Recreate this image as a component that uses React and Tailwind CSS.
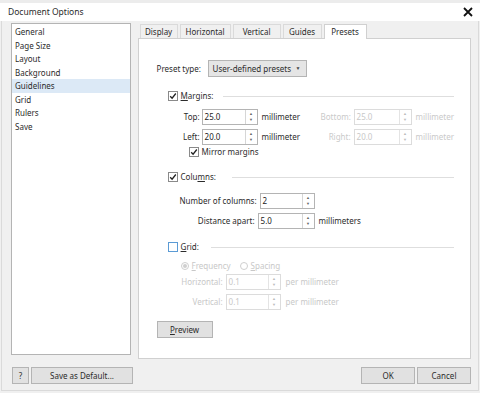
import React from "react";

const font = { fontFamily: '"Noto Sans", "Open Sans", sans-serif' };

const Spin = ({ value, width = "w-[42px]", disabled = false }) => (
    <div className={`flex h-[16px] ${disabled ? "border-[#dcdcdc]" : "border-[#b4b4b4]"} border bg-white`}>
        <div className={`${width} pl-[2px] leading-[14px] ${disabled ? "text-[#c8c8c8]" : "text-[#222]"}`}>
            {value}
        </div>
        <div className={`w-[12px] flex flex-col items-center justify-center border-l ${disabled ? "border-[#e4e4e4] text-[#bbb]" : "border-[#d6d6d6] text-[#666]"} text-[4px] leading-[6px]`}>
            <span>▲</span>
            <span>▼</span>
        </div>
    </div>
);

const Check = ({ checked = true, blue = false }) => (
    <div
        className={`w-[10px] h-[10px] border bg-white flex items-center justify-center ${
            blue ? "border-[#5b9bd5]" : "border-[#8a8a8a]"
        }`}
    >
        {checked && (
            <svg width="8" height="8" viewBox="0 0 8 8">
                <path d="M1.2 4.2 L3.1 6.2 L6.8 1.5" stroke="#222" strokeWidth="1.3" fill="none" />
            </svg>
        )}
    </div>
);

const Section = ({ label, under, checked, blue, lineFrom }) => (
    <div className="flex items-center">
        <Check checked={checked} blue={blue} />
        <span className="ml-[3px]">
            {label.slice(0, under)}
            <u>{label[under]}</u>
            {label.slice(under + 1)}
        </span>
        <div className={`flex-1 h-px bg-[#dedede] ${lineFrom}`} />
    </div>
);

const menu = ["General", "Page Size", "Layout", "Background", "Guidelines", "Grid", "Rulers", "Save"];
const tabs = [
    { name: "Display", w: "w-[38px]" },
    { name: "Horizontal", w: "w-[51px]" },
    { name: "Vertical", w: "w-[48px]" },
    { name: "Guides", w: "w-[39px]" },
    { name: "Presets", w: "w-[43px]" },
];

export default function App() {
    return (
        <div style={font} className="w-[480px] h-[393px] bg-[#f0f0f0] text-[8px] text-[#2b2b2b] flex flex-col overflow-hidden whitespace-nowrap">
            {/* title bar */}
            <div className="h-[21px] bg-white flex items-center justify-between pl-[8px] pr-[7px] border-t-[3px] border-[#ececec]">
                <span className="text-[8.5px]">Document Options</span>
                <svg width="10" height="10" viewBox="0 0 10 10">
                    <path d="M1 1 L9 9 M9 1 L1 9" stroke="#111" strokeWidth="1.8" />
                </svg>
            </div>

            <div className="flex-1 flex flex-col border-l border-r border-b border-[#dadada] mx-[1px] mb-[2px] bg-[#f0f0f0]">
                <div className="flex pt-[2px] pl-[9px] pr-[7px] gap-[7px]">
                    {/* left list */}
                    <div className="w-[121px] h-[332px] bg-white border border-[#b4b4b4] pt-[1px]">
                        {menu.map((m) => (
                            <div
                                key={m}
                                className={`h-[13.5px] leading-[13.5px] pl-[3px] ${
                                    m === "Guidelines" ? "bg-[#dce9f6]" : ""
                                }`}
                            >
                                {m}
                            </div>
                        ))}
                    </div>

                    {/* tab area */}
                    <div className="flex-1 flex flex-col">
                        <div className="flex h-[15px] items-end pl-[2px] gap-[2px]">
                            {tabs.map((t) => (
                                <div
                                    key={t.name}
                                    className={`${t.w} text-center border border-b-0 ${
                                        t.name === "Presets"
                                            ? "h-[15px] bg-white border-[#d0d0d0] relative top-px"
                                            : "h-[14px] bg-[#f0f0f0] border-[#dadada]"
                                    } leading-[13px]`}
                                >
                                    {t.name}
                                </div>
                            ))}
                        </div>
                        <div className="h-[321px] bg-white border border-[#d0d0d0] pl-[18px] pr-[16px] pt-[21px]">
                            {/* preset type */}
                            <div className="flex items-center">
                                <span className="w-[51px]">Preset type:</span>
                                <div className="w-[99px] h-[17px] bg-[#e5e5e5] border border-[#b4b4b4] flex items-center justify-between px-[4px]">
                                    <span>User-defined presets</span>
                                    <span className="text-[5px] text-[#444] pr-[1px]">▼</span>
                                </div>
                            </div>

                            {/* margins */}
                            <div className="mt-[13px] pl-[11px]">
                                <Section label="Margins:" under={0} checked lineFrom="ml-[10px]" />
                            </div>
                            <div className="mt-[7px] flex flex-col gap-[4px]">
                                <div className="flex items-center">
                                    <span className="w-[45px] text-right pr-[2px]">Top:</span>
                                    <Spin value="25.0" />
                                    <span className="ml-[4px] w-[59px]">millimeter</span>
                                    <span className="w-[33px] text-right pr-[3px] text-[#cacaca]">Bottom:</span>
                                    <Spin value="25.0" width="w-[44px]" disabled />
                                    <span className="ml-[4px] text-[#cacaca]">millimeter</span>
                                </div>
                                <div className="flex items-center">
                                    <span className="w-[45px] text-right pr-[2px]">Left:</span>
                                    <Spin value="20.0" />
                                    <span className="ml-[4px] w-[59px]">millimeter</span>
                                    <span className="w-[33px] text-right pr-[3px] text-[#cacaca]">Right:</span>
                                    <Spin value="20.0" width="w-[44px]" disabled />
                                    <span className="ml-[4px] text-[#cacaca]">millimeter</span>
                                </div>
                            </div>
                            <div className="mt-[1px] pl-[32px] flex items-center">
                                <Check />
                                <span className="ml-[3px]">Mirror margins</span>
                            </div>

                            {/* columns */}
                            <div className="mt-[13px] pl-[11px]">
                                <Section label="Columns:" under={4} checked lineFrom="ml-[16px]" />
                            </div>
                            <div className="mt-[10px] flex flex-col gap-[4px]">
                                <div className="flex items-center">
                                    <span className="w-[103px] text-right pr-[3px]">Number of columns:</span>
                                    <Spin value="2" width="w-[41px]" />
                                </div>
                                <div className="flex items-center">
                                    <span className="w-[101px] text-right pr-[3px]">Distance apart:</span>
                                    <Spin value="5.0" width="w-[43px]" />
                                    <span className="ml-[4px]">millimeters</span>
                                </div>
                            </div>

                            {/* grid */}
                            <div className="mt-[12px] pl-[11px]">
                                <Section label="Grid:" under={0} checked={false} blue lineFrom="ml-[12px]" />
                            </div>
                            <div className="mt-[7px] pl-[24px] flex items-center text-[#c8c8c8]">
                                <span className="w-[8px] h-[8px] rounded-full border border-[#cfcfcf] flex items-center justify-center">
                                    <span className="w-[4px] h-[4px] rounded-full bg-[#cfcfcf]" />
                                </span>
                                <span className="ml-[3px] w-[48px]">
                                    <u>F</u>requency
                                </span>
                                <span className="w-[8px] h-[8px] rounded-full border border-[#cfcfcf]" />
                                <span className="ml-[3px]">
                                    <u>S</u>pacing
                                </span>
                            </div>
                            <div className="mt-[2px] flex flex-col gap-[4px] text-[#c8c8c8]">
                                <div className="flex items-center">
                                    <span className="w-[69px] text-right pr-[3px]">Horizontal:</span>
                                    <Spin value="0.1" width="w-[41px]" disabled />
                                    <span className="ml-[5px]">per millimeter</span>
                                </div>
                                <div className="flex items-center">
                                    <span className="w-[69px] text-right pr-[3px]">Vertical:</span>
                                    <Spin value="0.1" width="w-[41px]" disabled />
                                    <span className="ml-[5px]">per millimeter</span>
                                </div>
                            </div>

                            <div className="mt-[11px]">
                                <button className="w-[56px] h-[17px] bg-[#e1e1e1] border border-[#b4b4b4] leading-[14px]">
                                    <u>P</u>review
                                </button>
                            </div>
                        </div>
                    </div>
                </div>

                {/* bottom buttons */}
                <div className="flex items-center justify-between pl-[10px] pr-[7px] mt-[8px]">
                    <div className="flex gap-[2px]">
                        <button className="w-[17px] h-[17px] bg-[#e1e1e1] border border-[#b4b4b4] leading-[14px]">?</button>
                        <button className="w-[102px] h-[17px] bg-[#e1e1e1] border border-[#b4b4b4] leading-[14px]">
                            Save as Default...
                        </button>
                    </div>
                    <div className="flex gap-[2px]">
                        <button className="w-[54px] h-[17px] bg-[#e1e1e1] border border-[#b4b4b4] leading-[14px]">OK</button>
                        <button className="w-[54px] h-[17px] bg-[#e1e1e1] border border-[#b4b4b4] leading-[14px]">Cancel</button>
                    </div>
                </div>
            </div>
        </div>
    );
}
